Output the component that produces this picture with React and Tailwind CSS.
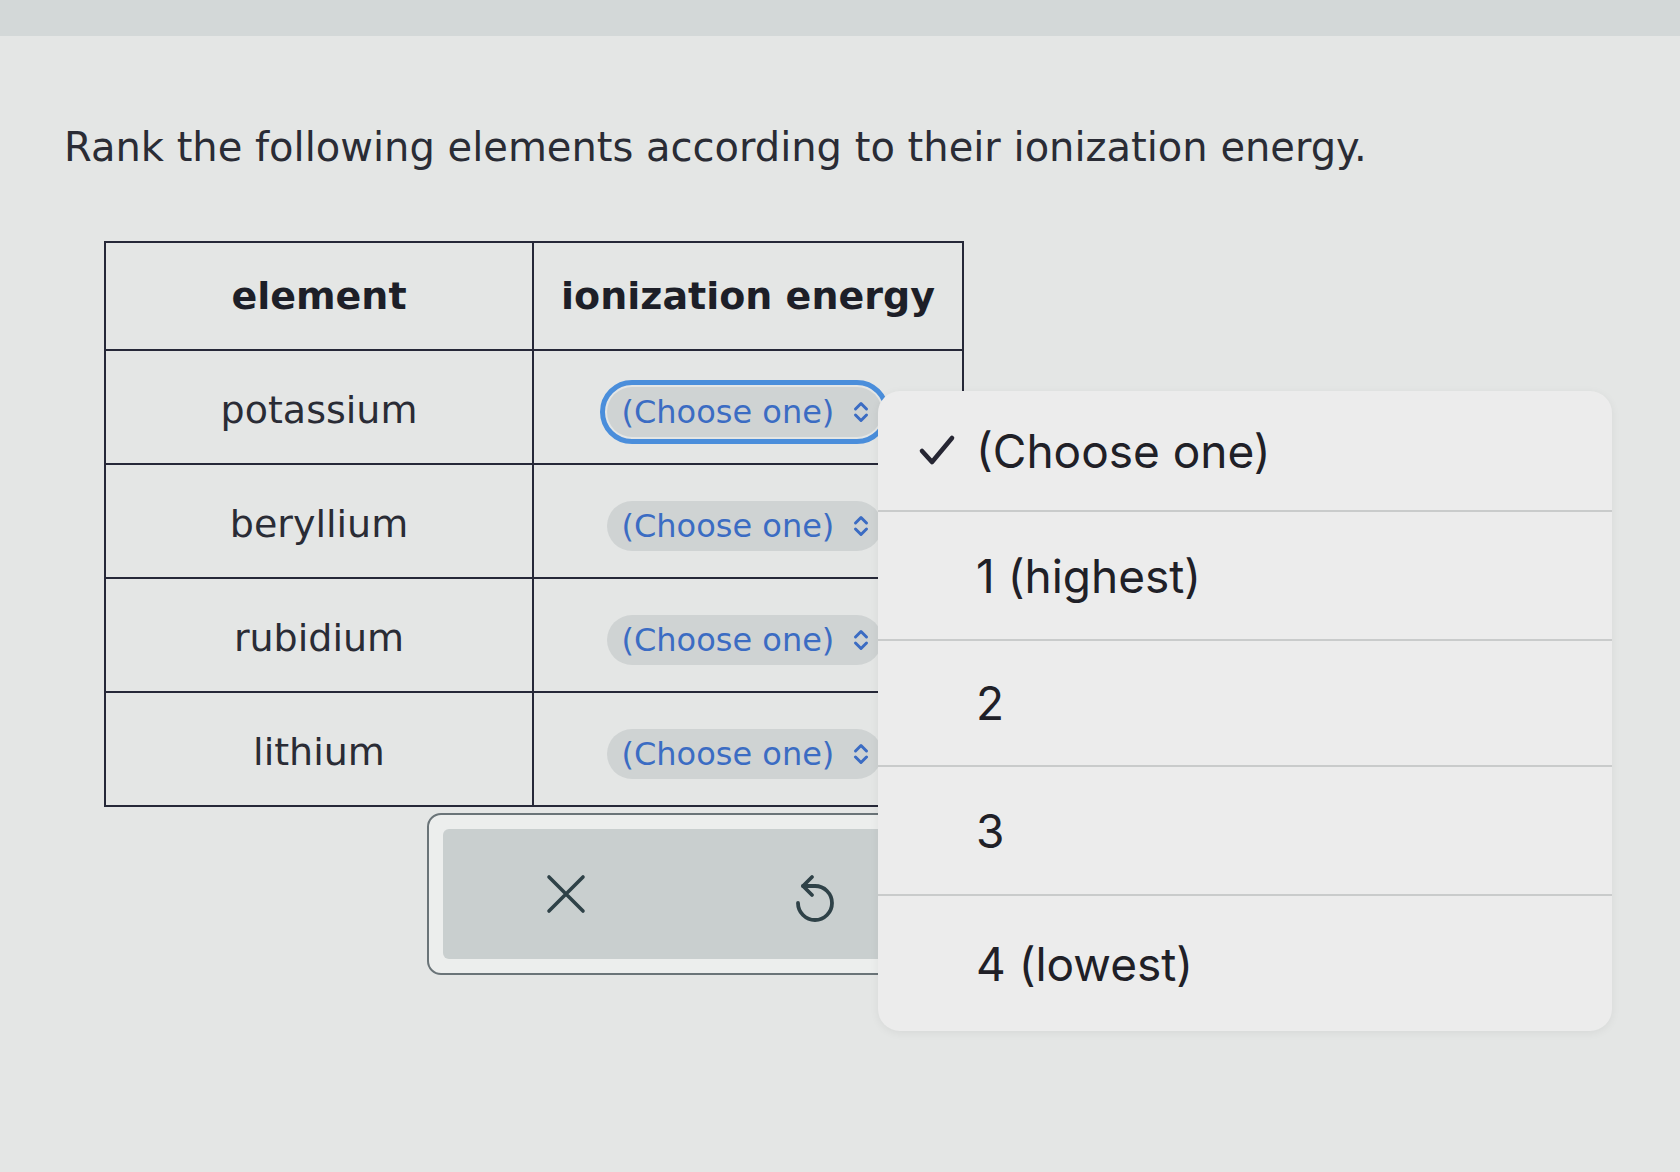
const rows = ["potassium", "beryllium", "rubidium", "lithium"];
const options = [
  { label: "(Choose one)", checked: true, h: "h-[121px]" },
  { label: "1 (highest)", h: "h-[129px]" },
  { label: "2", h: "h-[126px]" },
  { label: "3", h: "h-[129px]" },
  { label: "4 (lowest)", h: "h-[135px]" },
];

const UpDown = () => (
  <svg width="18" height="24" viewBox="0 0 18 24" fill="none" stroke="#3b6cc3" strokeWidth="3" strokeLinecap="round" strokeLinejoin="round">
    <path d="M3.5 9l5.5-5.5 5.5 5.5" />
    <path d="M3.5 15l5.5 5.5 5.5-5.5" />
  </svg>
);

const ChooseOne = ({ focused }) => (
  <div
    className={
      "flex items-center justify-between w-[275px] h-[50px] pl-[15px] pr-[12px] rounded-full bg-[#cfd3d3] " +
      (focused ? "outline-[5px] outline-[#4a8edb] outline-offset-[2px]" : "")
    }
  >
    <span className="text-[32px] leading-none text-[#3b6cc3]">(Choose one)</span>
    <UpDown />
  </div>
);

const CloseIcon = () => (
  <svg width="40" height="40" viewBox="0 0 40 40" fill="none" stroke="#2f4248" strokeWidth="3.6" strokeLinecap="round">
    <path d="M3 3l34 34M37 3L3 37" />
  </svg>
);

const UndoIcon = () => (
  <svg width="48" height="56" viewBox="0 0 48 56" fill="none" stroke="#2f4248" strokeWidth="3.8" strokeLinecap="round" strokeLinejoin="round">
    <path d="M12 17H24a17 17 0 1 1-17 17" />
    <path d="M21 8l-9 9 9 9" />
  </svg>
);

const Menu = () => (
  <div className="absolute left-[878px] top-[391px] z-10 w-[734px] overflow-hidden rounded-[22px] bg-[#ececec] shadow-[0_2px_10px_rgba(0,0,0,0.06)] font-['Inter',sans-serif] text-[46px] leading-none text-[#202027]">
    {options.map((o, i) => (
      <div
        key={o.label}
        className={
          "flex items-center " + o.h + (i < options.length - 1 ? " border-b-2 border-[#c9cbcb]" : "")
        }
      >
        <div className="w-[98px] flex justify-end pr-[18px]">
          {o.checked && (
            <svg width="40" height="36" viewBox="0 0 40 36" fill="none" stroke="#262633" strokeWidth="4.6" strokeLinecap="round" strokeLinejoin="round">
              <path d="M4 18l10 11L34 5" />
            </svg>
          )}
        </div>
        <span>{o.label}</span>
      </div>
    ))}
  </div>
);

export default function App() {
  return (
    <div className="relative min-h-[1172px] w-[1680px] bg-[#e4e6e5] font-['DejaVu_Sans',sans-serif] text-[#2a2c35] overflow-hidden">
      <div className="h-[36px] bg-[#d3d8d8]" />
      <div className="pl-[64px] pt-[91px]">
        <h1 className="text-[40px] leading-none font-normal">
          Rank the following elements according to their ionization energy.
        </h1>
        <table className="mt-[74px] ml-[40px] border-collapse border-2 border-[#262838] text-[38px]">
          <thead>
            <tr className="h-[108px]">
              <th className="w-[428px] border-2 border-[#262838] font-bold text-[#1d1f28]">element</th>
              <th className="w-[430px] border-2 border-[#262838] font-bold text-[#1d1f28]">ionization energy</th>
            </tr>
          </thead>
          <tbody>
            {rows.map((r, i) => (
              <tr key={r} className="h-[114px]">
                <td className="border-2 border-[#262838] text-center pt-[6px]">{r}</td>
                <td className="border-2 border-[#262838] pt-[10px]">
                  <div className="flex justify-center pr-[8px]">
                    <ChooseOne focused={i === 0} />
                  </div>
                </td>
              </tr>
            ))}
          </tbody>
        </table>
        <div className="ml-[363px] mt-[6px] w-[600px] h-[162px] rounded-[14px] border-2 border-[#6a7478] bg-[#eceeed] p-[14px]">
          <div className="flex h-full items-center rounded-[6px] bg-[#c9cfcf]">
            <div className="flex w-[240px] justify-center pl-[6px]">
              <CloseIcon />
            </div>
            <div className="flex w-[256px] justify-center pt-[6px] pl-[8px]">
              <UndoIcon />
            </div>
          </div>
        </div>
      </div>
      <Menu />
    </div>
  );
}
